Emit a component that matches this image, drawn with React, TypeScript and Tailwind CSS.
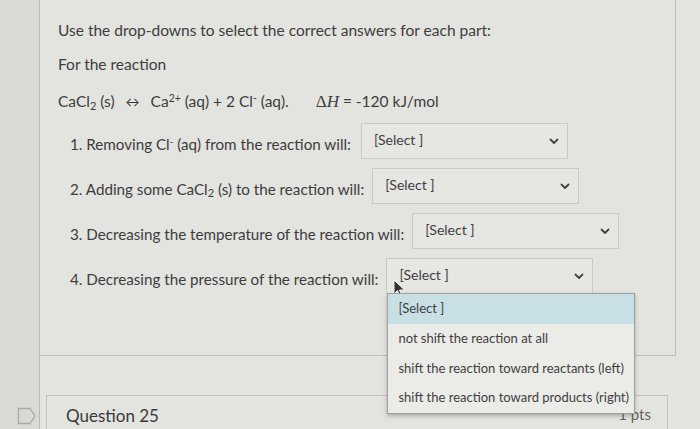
import React from "react";

function Chevron() {
  return (
    <svg width="10" height="7" viewBox="0 0 10 7" className="text-[#444]">
      <path d="M1.5 1.5 L5 5 L8.5 1.5" fill="none" stroke="currentColor" strokeWidth="1.8" strokeLinecap="round" strokeLinejoin="round" />
    </svg>
  );
}

function SelectBox({ width = "w-[207px]", children }: { width?: string; children?: React.ReactNode }) {
  return (
    <div className={`relative ${width} h-[36px] shrink-0 border border-[#c9c9c6] bg-[#e6e6e3] flex items-center justify-between pl-[12px] pr-[8px]`}>
      <span className="text-[14px] text-[#3f3f3f] -mt-[3px]">[Select ]</span>
      <span className="mt-[1px]"><Chevron /></span>
      {children}
    </div>
  );
}

function Row({ label, gap, children }: { label: React.ReactNode; gap: string; children?: React.ReactNode }) {
  return (
    <div className="flex items-center h-[36px] mb-[9px]">
      <div className="text-[15.2px] text-[#3d3d3d] mt-[6px]">{label}</div>
      <div className={gap}>
        <SelectBox>{children}</SelectBox>
      </div>
    </div>
  );
}

function Cursor() {
  return (
    <svg width="14" height="20" viewBox="0 0 14 20" className="absolute left-[6px] top-[20px]">
      <path d="M1 1 L1 15 L4.5 11.5 L7 17.5 L9 16.7 L6.5 11 L11.5 11 Z" fill="#333" stroke="#f4f4f4" strokeWidth="1" />
    </svg>
  );
}

const options = [
  "not shift the reaction at all",
  "shift the reaction toward reactants (left)",
  "shift the reaction toward products (right)",
];

export default function App() {
  return (
    <div
      className="w-[700px] h-[429px] overflow-hidden bg-[#e3e3e0] text-[#3d3d3d] flex"
      style={{ fontFamily: "Lato, 'Open Sans', sans-serif" }}
    >
      {/* left rail */}
      <div className="w-[40px] shrink-0 bg-[#d9d9d6] border-r border-[#b9b9b6] flex flex-col justify-end pb-[4px] pl-[17px]">
        <svg width="20" height="18" viewBox="0 0 20 18">
          <path d="M1.5 1.5 H13 L18 9 L13 16.5 H1.5 Z" fill="none" stroke="#a8a8a5" strokeWidth="1.3" />
        </svg>
      </div>

      <div className="flex-1 flex flex-col">
        {/* question card */}
        <div className="w-[636px] h-[356px] border-r border-b border-[#bdbdba] pl-[18px] pt-[19px]">
          <p className="text-[15.5px] leading-[22px]">Use the drop-downs to select the correct answers for each part:</p>
          <p className="text-[15.5px] leading-[22px] mt-[12px]">For the reaction</p>
          <p className="text-[15.5px] leading-[22px] mt-[15px] flex items-center">
            <span>
              CaCl<sub className="text-[11px]">2</sub> (s) <span className="mx-[7px] text-[14px]">↔</span> Ca
              <sup className="text-[10.5px]">2+</sup> (aq) + 2 Cl<sup className="text-[10.5px]">-</sup> (aq).
            </span>
            <span className="ml-[27px]">
              <span className="text-[17px]" style={{ fontFamily: "'Liberation Serif', serif" }}>
                Δ<i>H</i>
              </span>{" "}
              = -120 kJ/mol
            </span>
          </p>

          <div className="pl-[12px] mt-[10px]">
            <Row label={<>1. Removing Cl<sup className="text-[10px]">-</sup> (aq) from the reaction will:</>} gap="ml-[10px]" />
            <Row label={<>2. Adding some CaCl<sub className="text-[11px]">2</sub> (s) to the reaction will:</>} gap="ml-[8px]" />
            <Row label="3. Decreasing the temperature of the reaction will:" gap="ml-[8px]" />
            <Row label="4. Decreasing the pressure of the reaction will:" gap="ml-[8px]">
              <Cursor />
              {/* open list */}
              <div className="absolute left-[0px] top-[34px] w-[248px] z-10 border border-[#9fa09e] bg-[#ebebe8] shadow-[0_2px_4px_rgba(0,0,0,0.25)]">
                <div className="h-[30px] bg-[#c7dfe5] pl-[10px] flex items-center text-[13px] text-[#3f3f3f]">[Select ]</div>
                {options.map((o) => (
                  <div key={o} className="h-[29.5px] pl-[10px] flex items-center text-[13px] text-[#3f3f3f] whitespace-nowrap">
                    {o}
                  </div>
                ))}
              </div>
            </Row>
          </div>
        </div>

        {/* next question card */}
        <div className="mt-[39px] ml-[6px] w-[622px] flex-1 border-t border-l border-r border-[#c2c2bf] flex items-end justify-between pl-[19px] pr-[16px] pb-[1px]">
          <span className="text-[17px] text-[#3a3a3a]">Question 25</span>
          <span className="text-[15px] text-[#666] mb-[3px]">1 pts</span>
        </div>
      </div>
      <div className="flex-1" />
    </div>
  );
}
